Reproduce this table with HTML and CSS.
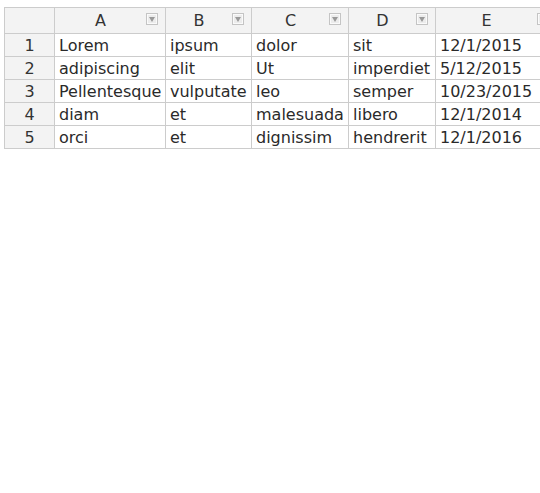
FILE: index.html
```html
<!DOCTYPE html>
<html>
<head>
<meta charset="utf-8">
<link rel="stylesheet" href="styles.css">
</head>
<body>
<div class="sheet-wrap">
<table class="sheet">
<thead>
<tr>
<th class="corner"></th>
<th class="col-a"><div class="hd"><span class="hd-label">A</span><span class="filter"></span></div></th>
<th class="col-b"><div class="hd"><span class="hd-label">B</span><span class="filter"></span></div></th>
<th class="col-c"><div class="hd"><span class="hd-label">C</span><span class="filter"></span></div></th>
<th class="col-d"><div class="hd"><span class="hd-label">D</span><span class="filter"></span></div></th>
<th class="col-e"><div class="hd"><span class="hd-label">E</span><span class="filter"></span></div></th>
</tr>
</thead>
<tbody>
<tr><td class="rn">1</td><td>Lorem</td><td>ipsum</td><td>dolor</td><td>sit</td><td>12/1/2015</td></tr>
<tr><td class="rn">2</td><td>adipiscing</td><td>elit</td><td>Ut</td><td>imperdiet</td><td>5/12/2015</td></tr>
<tr><td class="rn">3</td><td>Pellentesque</td><td>vulputate</td><td>leo</td><td>semper</td><td>10/23/2015</td></tr>
<tr><td class="rn">4</td><td>diam</td><td>et</td><td>malesuada</td><td>libero</td><td>12/1/2014</td></tr>
<tr><td class="rn">5</td><td>orci</td><td>et</td><td>dignissim</td><td>hendrerit</td><td>12/1/2016</td></tr>
</tbody>
</table>
</div>
</body>
</html>
```
FILE: styles.css
```css
html, body {
  margin: 0;
  padding: 0;
  background: #fff;
}
body {
  font-family: "DejaVu Sans", Verdana, sans-serif;
  font-size: 16px;
  color: #2a2a2a;
}
.sheet-wrap {
  padding: 7px 0 0 4px;
  width: 536px;
  overflow: hidden;
}
.sheet {
  border-collapse: separate;
  border-spacing: 0;
  table-layout: fixed;
  width: 553px;
  border-left: 1px solid #ccc;
  border-top: 1px solid #ccc;
}
.sheet th, .sheet td {
  box-sizing: border-box;
  border-right: 1px solid #ccc;
  border-bottom: 1px solid #ccc;
  white-space: nowrap;
  overflow: hidden;
}
.sheet th {
  background: #f3f3f3;
  font-weight: normal;
  color: #333;
  height: 26px;
  padding: 0;
  line-height: 19px;
}
.sheet td {
  height: 23px;
  line-height: 19px;
  padding: 0 4px;
  text-align: left;
}
.sheet td.rn {
  background: #f3f3f3;
  text-align: center;
  color: #333;
}
.corner { width: 50px; }
.col-a { width: 111px; }
.col-b { width: 86px; }
.col-c { width: 97px; }
.col-d { width: 87px; }
.col-e { width: 121px; }
.hd {
  display: flex;
  align-items: center;
  height: 25px;
  padding-right: 7px;
}
.hd-label {
  flex: 1;
  text-align: center;
}
.filter {
  position: relative;
  box-sizing: border-box;
  width: 12px;
  height: 12px;
  border: 1px solid #c4c4c4;
  box-shadow: inset 0 0 0 1px #fafafa;
  background: #ececec;
  margin-top: -3px;
}
.filter::after {
  content: "";
  position: absolute;
  left: 1.5px;
  top: 3px;
  border-left: 3.5px solid transparent;
  border-right: 3.5px solid transparent;
  border-top: 5px solid #9a9a9a;
}
```
